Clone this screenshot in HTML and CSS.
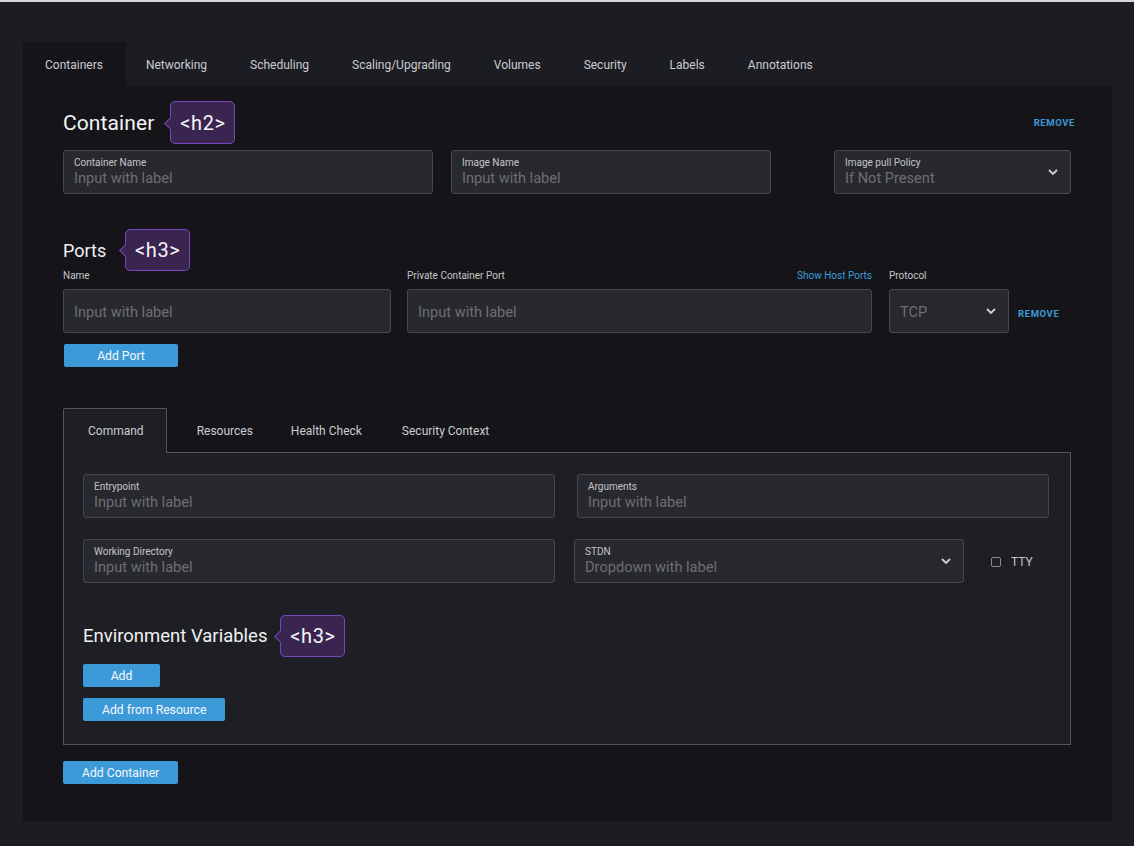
FILE: index.html
```html
<!DOCTYPE html>
<html lang="en">
<head>
<meta charset="utf-8">
<title>Container</title>
<link rel="stylesheet" href="styles.css">
</head>
<body>
<div class="page">
  <nav class="tabs">
    <div class="tab active">Containers</div>
    <div class="tab">Networking</div>
    <div class="tab">Scheduling</div>
    <div class="tab">Scaling/Upgrading</div>
    <div class="tab">Volumes</div>
    <div class="tab">Security</div>
    <div class="tab">Labels</div>
    <div class="tab">Annotations</div>
  </nav>
  <main class="panel">
    <div class="head-row head-container">
      <h2 class="h2">Container</h2>
      <span class="tag tag-h2">&lt;h2&gt;</span>
      <a class="remove remove-top">REMOVE</a>
    </div>

    <div class="row-container">
      <div class="field w-name">
        <div class="f-label">Container Name</div>
        <div class="f-ph">Input with label</div>
      </div>
      <div class="field w-image">
        <div class="f-label">Image Name</div>
        <div class="f-ph">Input with label</div>
      </div>
      <div class="field select w-policy">
        <div class="f-label">Image pull Policy</div>
        <div class="f-ph">If Not Present</div>
        <svg class="chev" viewBox="0 0 10 6" width="10" height="6"><path d="M1 1 L5 5 L9 1" fill="none" stroke="#d0d1d4" stroke-width="1.8"/></svg>
      </div>
    </div>

    <div class="head-row head-ports">
      <h3 class="h3">Ports</h3>
      <span class="tag tag-ports">&lt;h3&gt;</span>
    </div>

    <div class="ports-grid">
      <div class="col">
        <div class="col-label">Name</div>
        <div class="field plain"><div class="f-ph">Input with label</div></div>
      </div>
      <div class="col">
        <div class="col-label"><span>Private Container Port</span><a class="link">Show Host Ports</a></div>
        <div class="field plain"><div class="f-ph">Input with label</div></div>
      </div>
      <div class="col">
        <div class="col-label">Protocol</div>
        <div class="field plain select">
          <div class="f-ph">TCP</div>
          <svg class="chev" viewBox="0 0 10 6" width="10" height="6"><path d="M1 1 L5 5 L9 1" fill="none" stroke="#d0d1d4" stroke-width="1.8"/></svg>
        </div>
      </div>
      <div class="col col-remove">
        <a class="remove">REMOVE</a>
      </div>
    </div>

    <button class="btn btn-port">Add Port</button>

    <div class="subtabs">
      <div class="subtab active">Command</div>
      <div class="subtab first">Resources</div>
      <div class="subtab">Health Check</div>
      <div class="subtab">Security Context</div>
    </div>

    <section class="subpanel">
      <div class="sub-row1">
        <div class="field">
          <div class="f-label">Entrypoint</div>
          <div class="f-ph">Input with label</div>
        </div>
        <div class="field">
          <div class="f-label">Arguments</div>
          <div class="f-ph">Input with label</div>
        </div>
      </div>
      <div class="sub-row2">
        <div class="field w-wd">
          <div class="f-label">Working Directory</div>
          <div class="f-ph">Input with label</div>
        </div>
        <div class="field select w-stdn">
          <div class="f-label">STDN</div>
          <div class="f-ph">Dropdown with label</div>
          <svg class="chev" viewBox="0 0 10 6" width="10" height="6"><path d="M1 1 L5 5 L9 1" fill="none" stroke="#d0d1d4" stroke-width="1.8"/></svg>
        </div>
        <label class="check"><span class="box"></span><span class="check-text">TTY</span></label>
      </div>

      <div class="head-row head-env">
        <h3 class="h3">Environment Variables</h3>
        <span class="tag tag-env">&lt;h3&gt;</span>
      </div>
      <div class="btn-stack">
        <button class="btn btn-add">Add</button>
        <button class="btn">Add from Resource</button>
      </div>
    </section>

    <button class="btn btn-container">Add Container</button>
  </main>
</div>
</body>
</html>
```

FILE: styles.css
```css
* { box-sizing: border-box; }

html, body {
  margin: 0;
  padding: 0;
}

body {
  background: #1c1d22;
  border-top: 2px solid #d6d6d8;
  font-family: Roboto, "Noto Sans", "Liberation Sans", sans-serif;
  color: #c8c9cc;
  min-height: 846px;
}

.page {
  margin: 40px 0 0 23px;
  width: 1089px;
}

/* outer tabs */
.tabs {
  display: flex;
  height: 44px;
}

.tab {
  height: 44px;
  padding: 2px 21px 0 22px;
  line-height: 42px;
  font-size: 12px;
  color: #cbccd0;
}

.tab.active {
  background: #151519;
  padding-right: 23px;
}

.tab.active + .tab {
  padding-left: 20px;
}

/* main panel */
.panel {
  background: #151519;
  padding: 15px 41px 37px 40px;
}

.head-row {
  display: flex;
  align-items: center;
  height: 43px;
}

.h2 {
  margin: 0;
  font-size: 21px;
  font-weight: 400;
  color: #f4f4f6;
  letter-spacing: 0.1px;
}

.h3 {
  margin: 0;
  font-size: 18px;
  font-weight: 400;
  color: #f0f0f2;
}

.head-env .h3 {
  font-size: 18.5px;
}

.tag {
  position: relative;
  display: inline-flex;
  align-items: center;
  justify-content: center;
  width: 65px;
  height: 43px;
  margin-left: 16px;
  background: #3a2551;
  border: 1px solid #7a46c0;
  border-radius: 5px;
  color: #f6f4fa;
  font-size: 20px;
  letter-spacing: 0.6px;
}

.tag::before {
  content: "";
  position: absolute;
  left: -5px;
  top: 50%;
  width: 8px;
  height: 8px;
  margin-top: -4px;
  background: #3a2551;
  border-left: 1px solid #7a46c0;
  border-bottom: 1px solid #7a46c0;
  transform: rotate(45deg);
}

.remove {
  font-size: 9.5px;
  font-weight: 700;
  letter-spacing: 0.6px;
  color: #3d9ad9;
}

.remove-top {
  margin-left: auto;
  margin-right: -4px;
}

/* fields */
.field {
  position: relative;
  height: 44px;
  background: #28292e;
  border: 1px solid #47484d;
  border-radius: 3px;
  padding: 6px 10px 0;
}

.f-label {
  font-size: 10px;
  line-height: 12px;
  color: #c4c5c9;
}

.f-ph {
  font-size: 14.6px;
  line-height: 18px;
  color: #6d6e73;
}

.field.plain {
  display: flex;
  align-items: center;
  padding-top: 1px;
}

.field.select {
  padding-right: 30px;
}

.chev {
  position: absolute;
  right: 12px;
  top: 50%;
  margin-top: -3px;
}

.row-container {
  display: flex;
  margin-top: 6px;
}

.w-name { width: 370px; }
.w-image { width: 320px; margin-left: 18px; }
.w-policy { width: 237px; margin-left: 63px; }

.head-ports {
  margin-top: 35px;
  height: 42px;
}

.head-ports .tag { margin-left: 19px; height: 42px; }

.ports-grid {
  display: grid;
  grid-template-columns: 328px 465px 121px auto;
  column-gap: 16px;
  margin-top: -2px;
}

.ports-grid .col:nth-child(3) { margin-left: 1px; }

.col-label {
  display: flex;
  justify-content: space-between;
  font-size: 10px;
  line-height: 12px;
  height: 12px;
  margin-bottom: 8px;
  padding-top: 1px;
  color: #c4c5c9;
}

.link {
  color: #3d9ad9;
}

.col-remove {
  display: flex;
  align-items: flex-end;
  margin-left: -7px;
}

.col-remove .remove {
  line-height: 12px;
  margin-bottom: 13px;
}

/* buttons */
.btn {
  display: block;
  height: 23px;
  padding: 0 19px;
  border: 0;
  border-radius: 2px;
  background: #3d9ad9;
  color: #f4f8fc;
  font-family: Roboto, "Noto Sans", "Liberation Sans", sans-serif;
  font-size: 12.2px;
  line-height: 25px;
}

.btn-port {
  min-width: 114px;
  margin: 11px 0 0 1px;
}

.btn-add {
  min-width: 77px;
}

.btn-container {
  margin-top: 16px;
  min-width: 114px;
}

.btn-stack {
  display: flex;
  flex-direction: column;
  align-items: flex-start;
  gap: 11px;
  margin-top: 7px;
}

/* sub tabs */
.subtabs {
  display: flex;
  height: 45px;
  margin-top: 41px;
  position: relative;
  z-index: 1;
}

.subtab {
  padding: 2px 20px 0;
  line-height: 43px;
  font-size: 12px;
  color: #cbccd0;
}

.subtab.active {
  padding: 1px 22px 0 24px;
  background: #1e1f24;
  border: 1px solid #55565b;
  border-bottom: 0;
  border-radius: 2px 2px 0 0;
  height: 45px;
  line-height: 43px;
}

.subtab.first {
  margin-left: 10px;
}

.subtab.first + .subtab {
  padding-left: 18px;
}

.subpanel {
  margin-top: -1px;
  background: #1e1f24;
  border: 1px solid #55565b;
  padding: 21px 21px 23px 19px;
}

.sub-row1 {
  display: grid;
  grid-template-columns: 472px 472px;
  column-gap: 22px;
}

.sub-row2 {
  display: flex;
  align-items: center;
  margin-top: 21px;
}

.w-wd { width: 472px; }
.w-stdn { width: 390px; margin-left: 19px; }

.check {
  display: flex;
  align-items: center;
  margin-left: 27px;
  margin-top: 1px;
}

.box {
  width: 10px;
  height: 10px;
  border: 1px solid #8a8b90;
  border-radius: 2px;
}

.check-text {
  margin-left: 10px;
  font-size: 12px;
  color: #c4c5c9;
}

.head-env {
  margin-top: 32px;
  height: 42px;
}

.head-env .tag { margin-left: 13px; height: 42px; }
```
